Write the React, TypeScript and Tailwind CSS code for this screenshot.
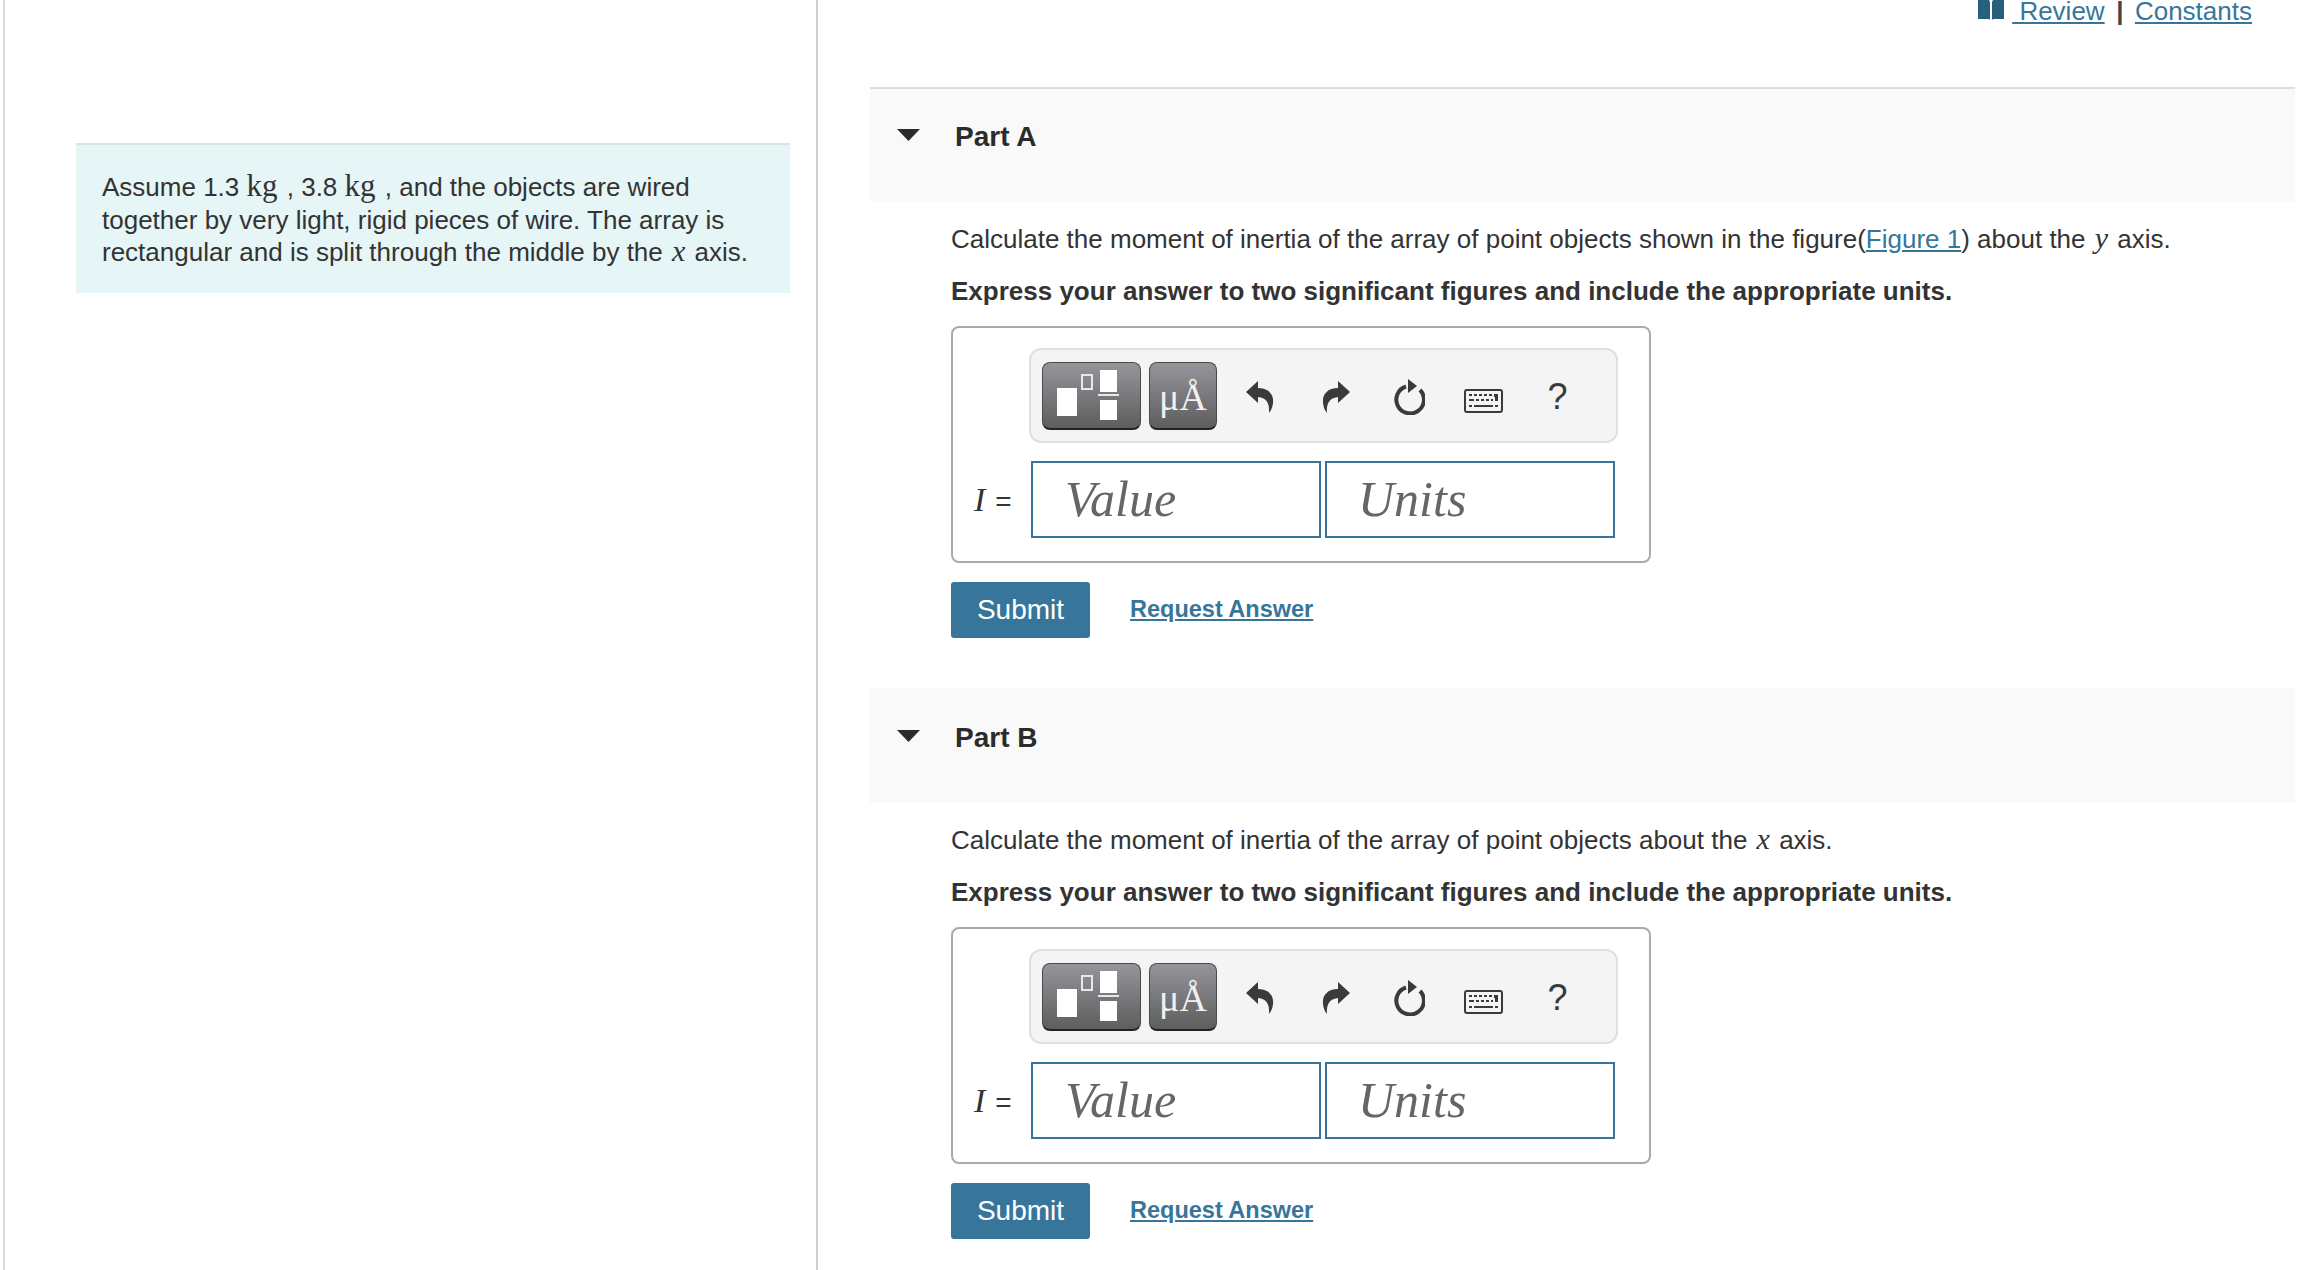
import React from 'react';

const UndoIcon = () => (
  <svg viewBox="0 0 28 32" className="w-[28px] h-[32px] fill-[#3a3a3a]">
    <path d="M0 11 L12 0 L12 7 C22 7 28 13 27 22 C26.5 26 25.5 29 23 32 C23.5 24 22 17 12 16 L12 22 Z" />
  </svg>
);

const RedoIcon = () => (
  <svg viewBox="0 0 28 32" className="w-[28px] h-[32px] fill-[#3a3a3a] -scale-x-100">
    <path d="M0 11 L12 0 L12 7 C22 7 28 13 27 22 C26.5 26 25.5 29 23 32 C23.5 24 22 17 12 16 L12 22 Z" />
  </svg>
);

const ResetIcon = () => (
  <svg viewBox="0 0 32 36" className="w-[32px] h-[36px]">
    <path d="M13 7.5 A13.8 13.8 0 1 0 27 11" fill="none" stroke="#3a3a3a" strokeWidth="4" />
    <path d="M15 0 L24 7 L15 14 Z" fill="#3a3a3a" />
  </svg>
);

const KeyboardIcon = () => (
  <svg viewBox="0 0 39 24" className="w-[39px] h-[24px]">
    <rect x="1" y="1" width="37" height="22" rx="2" fill="none" stroke="#3a3a3a" strokeWidth="2" />
    <path d="M5 5h3v2H5zM10 5h3v2h-3zM15 5h3v2h-3zM20 5h3v2h-3zM25 5h3v2h-3zM30 5h4v7h-3V8h-1zM5 10h5v2H5zM12 10h3v2h-3zM17 10h3v2h-3zM22 10h3v2h-3zM27 10h2v2h-2zM5 16h3v2H5zM10 16h19v2H10zM31 16h3v2h-3z" fill="#3a3a3a" />
  </svg>
);

const TemplatesIcon = () => (
  <svg viewBox="0 0 62 50" className="w-[62px] h-[50px]">
    <rect x="0" y="18" width="20" height="28" fill="#fff" />
    <rect x="25" y="5" width="10" height="14" fill="none" stroke="#e8e8e8" strokeWidth="2" />
    <rect x="43" y="0" width="17" height="22" fill="#fff" />
    <rect x="41" y="24" width="21" height="2" fill="#e8e8e8" />
    <rect x="43" y="30" width="17" height="20" fill="#fff" />
  </svg>
);

function AnswerBox() {
  return (
    <div className="w-[700px] h-[237px] border-2 border-[#aaaaaa] rounded-[8px] bg-white pt-[20px] pl-[76px]">
      <div className="w-[589px] h-[95px] border-2 border-[#e0e0e0] rounded-[12px] bg-[#f4f4f4] flex items-center pl-[11px]">
        <div className="w-[99px] h-[68px] rounded-[8px] border border-[#4a4a4a] border-b-2 border-b-[#222] bg-linear-to-b from-[#96959c] to-[#5e5e5e] flex items-center justify-center pr-[7px]">
          <TemplatesIcon />
        </div>
        <div className="w-[68px] h-[68px] ml-[8px] rounded-[8px] border border-[#4a4a4a] border-b-2 border-b-[#222] bg-linear-to-b from-[#96959c] to-[#5e5e5e] flex items-end justify-center pb-[12px] text-[#f0f0f0] text-[38px] leading-[38px] font-['Liberation_Serif',serif]">
          μÅ
        </div>
        <div className="w-[75px] ml-[5px] flex justify-center mt-[2px]"><UndoIcon /></div>
        <div className="w-[73px] ml-[2px] flex justify-center mt-[2px]"><RedoIcon /></div>
        <div className="w-[74px] flex justify-center mt-[2px]"><ResetIcon /></div>
        <div className="w-[74px] flex justify-center pt-[10px]"><KeyboardIcon /></div>
        <div className="w-[75px] flex justify-center text-[36px] leading-[36px] text-[#3a3a3a] mt-[2px]">?</div>
      </div>
      <div className="flex items-center mt-[18px] -ml-[76px]">
        <div className="w-[78px] pl-[21px] text-[#333] text-[28px] whitespace-nowrap">
          <i className="font-['Liberation_Serif',serif] text-[34px]">I</i>
          <span className="ml-[10px]">=</span>
        </div>
        <div className="w-[290px] h-[77px] border-2 border-[#37769a] flex items-center pl-[32px] font-['Liberation_Serif',serif] italic text-[50px] text-[#666]">
          Value
        </div>
        <div className="w-[290px] h-[77px] ml-[4px] border-2 border-[#37769a] flex items-center pl-[31px] font-['Liberation_Serif',serif] italic text-[50px] text-[#666]">
          Units
        </div>
      </div>
    </div>
  );
}

function Part({ name, ruled, children }: { name: string; ruled?: boolean; children: React.ReactNode }) {
  return (
    <section>
      <div className={`h-[115px] bg-[#f9f9f9] border-t-2 flex items-start ${ruled ? 'border-[#dddddd]' : 'border-[#f9f9f9]'}`}>
        <svg viewBox="0 0 23 12" className="w-[23px] h-[12px] mt-[40px] ml-[27px] fill-[#2b2b2b]">
          <path d="M0 0h23L11.5 12z" />
        </svg>
        <h2 className="ml-[35px] mt-[30px] text-[28px] leading-[36px] font-bold text-[#2b2b2b]">{name}</h2>
      </div>
      <div className="pl-[81px]">
        <p className="mt-[19px] leading-[36px]">{children}</p>
        <p className="mt-[16px] leading-[36px] font-bold">
          Express your answer to two significant figures and include the appropriate units.
        </p>
        <div className="mt-[17px]"><AnswerBox /></div>
        <div className="flex items-center mt-[19px]">
          <button className="w-[139px] h-[56px] rounded-[3px] bg-[#37769a] text-white text-[28px]">Submit</button>
          <a className="ml-[40px] text-[23.5px] font-bold text-[#37769a] underline">Request Answer</a>
        </div>
      </div>
    </section>
  );
}

const MathVar = ({ children }: { children: string }) => (
  <i className="font-['Liberation_Serif',serif] text-[30px] leading-none mx-[2px]">{children}</i>
);

const Kg = () => (
  <span className="font-['Liberation_Serif',serif] text-[31px] leading-none mr-[2px]">kg</span>
);

export default function App() {
  return (
    <div className="w-[2322px] h-[1270px] overflow-hidden bg-white flex font-['Liberation_Sans',Arial,sans-serif] text-[26px] text-[#333333]">
      {/* Intro column */}
      <aside className="w-[815px] h-full ml-[3px] border-l-2 border-r-2 border-l-[#d8d8d8] border-r-[#c8d2d8] pl-[71px] pr-[26px] pt-[143px] shrink-0">
        <div className="h-[150px] bg-[#e6f5f6] border-t-2 border-[#dde2e4] pl-[26px] pt-[25px] leading-[32.5px] whitespace-nowrap">
          Assume 1.3 <Kg /> , 3.8 <Kg /> , and the objects are wired
          <br />
          together by very light, rigid pieces of wire. The array is
          <br />
          rectangular and is split through the middle by the <MathVar>x</MathVar> axis.
        </div>
      </aside>

      <main className="w-[1425px] ml-[52px] shrink-0 relative">
        {/* Links */}
        <div className="h-[87px] flex justify-end items-start pr-[43px]">
          <div className="flex items-start -mt-[7px] leading-[36px]">
            <svg viewBox="0 0 26 20" className="w-[26px] h-[20px] mt-[7px] fill-[#27607c]">
              <path d="M0 0h11l1 2v18l-1-1H0zM26 0H15l-1 2v18l1-1h11z" />
            </svg>
            <a className="ml-[8px] text-[#37769a] underline">&nbsp;Review</a>
            <span className="mx-[11.5px] font-bold text-[#444]">|</span>
            <a className="text-[#37769a] underline">Constants</a>
          </div>
        </div>

        <Part name="Part A" ruled>
          Calculate the moment of inertia of the array of point objects shown in the figure(<a className="text-[#37769a] underline">Figure 1</a>) about the <MathVar>y</MathVar> axis.
        </Part>
        <div className="h-[50px]" />
        <Part name="Part B">
          Calculate the moment of inertia of the array of point objects about the <MathVar>x</MathVar> axis.
        </Part>
      </main>
    </div>
  );
}
